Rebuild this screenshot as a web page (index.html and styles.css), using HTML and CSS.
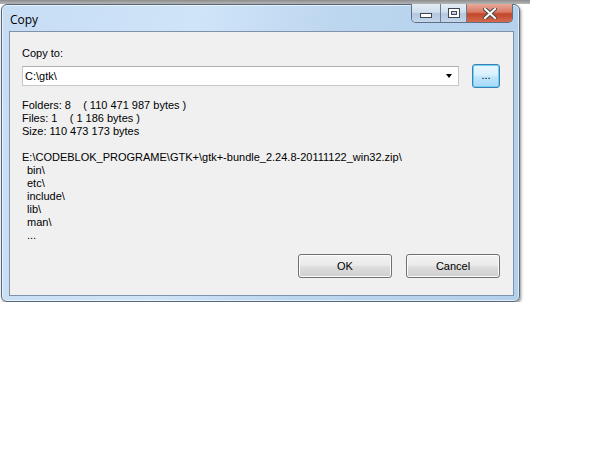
FILE: index.html
```html
<!DOCTYPE html>
<html lang="en">
<head>
    <meta charset="UTF-8">
    <meta name="viewport" content="width=device-width, initial-scale=1.0">
    <title>Copy</title>
    <link rel="stylesheet" href="styles.css">
</head>
<body>
    <div class="window">
        <div class="titlebar">
            <span class="title">Copy</span>
        </div>
        <!-- botones de la barra de titulo -->
        <div class="caption-buttons">
            <div class="cap-btn cap-min"><span class="min-glyph"></span></div>
            <div class="cap-btn cap-max"><span class="max-glyph"></span></div>
            <div class="cap-btn cap-close">
                <svg width="14" height="11" viewBox="0 0 14 11">
                    <path d="M2 1 L12 10 M12 1 L2 10" stroke="#4a4a4a" stroke-width="4" stroke-linecap="square"/>
                    <path d="M2 1 L12 10 M12 1 L2 10" stroke="#ffffff" stroke-width="2" stroke-linecap="square"/>
                </svg>
            </div>
        </div>

        <div class="client">
            <div class="label">Copy to:</div>
            <div class="dest-row">
                <div class="combo">
                    <span class="combo-text">C:\gtk\</span>
                    <span class="combo-arrow"></span>
                </div>
                <button class="browse-button">...</button>
            </div>

            <div class="info">
                <div class="line">Folders: 8    ( 110 471 987 bytes )</div>
                <div class="line">Files: 1    ( 1 186 bytes )</div>
                <div class="line">Size: 110 473 173 bytes</div>
            </div>

            <div class="tree">
                <div class="line">E:\CODEBLOK_PROGRAME\GTK+\gtk+-bundle_2.24.8-20111122_win32.zip\</div>
                <div class="line sub">bin\</div>
                <div class="line sub">etc\</div>
                <div class="line sub">include\</div>
                <div class="line sub">lib\</div>
                <div class="line sub">man\</div>
                <div class="line sub">...</div>
            </div>

            <div class="actions">
                <button class="dlg-button">OK</button>
                <button class="dlg-button">Cancel</button>
            </div>
        </div>
    </div>
</body>
</html>
```

FILE: styles.css
```css
body {
    margin: 0;
    font-family: "Liberation Sans", Arial, sans-serif;
    font-size: 11px;
    color: #000;
    background: linear-gradient(#8c8c8c, #b8b8b8) 0 0 / 530px 4px no-repeat, #ffffff;
}
.window {
    position: relative;
    box-sizing: border-box;
    width: 519px;
    height: 298px;
    margin: 4px 0 0 1px;
    border: 1px solid #55677c;
    border-radius: 6px;
    background: linear-gradient(100deg, #c6ddf4 0%, #cfe4f8 35%, #bcd6ef 60%, #b2cfeb 100%);
    box-shadow: 1px 2px 3px rgba(0,0,0,0.45), inset 0 0 0 1px rgba(255,255,255,0.6);
    display: flex;
    flex-direction: column;
}
.titlebar {
    height: 26px;
    display: flex;
    align-items: center;
    padding-left: 8px;
}
.title {
    font-family: "Open Sans", "Liberation Sans", sans-serif;
    font-size: 12px;
    color: #000;
    margin-top: 3px;
}
.caption-buttons {
    position: absolute;
    top: -1px;
    right: 6px;
    display: flex;
    height: 18px;
    border: 1px solid #5f6f84;
    border-top: none;
    border-radius: 0 0 5px 5px;
    overflow: hidden;
}
.cap-btn {
    height: 18px;
    display: flex;
    align-items: center;
    justify-content: center;
}
.cap-min, .cap-max {
    width: 28px;
    background: linear-gradient(#e4edf7 0%, #d0deee 45%, #b3c7de 55%, #c4d6ea 100%);
    border-right: 1px solid #6c7d92;
}
.cap-max {
    width: 25px;
}
.cap-close {
    width: 45px;
    background: linear-gradient(#e9a99a 0%, #d97a63 45%, #c2462b 55%, #d46a4e 100%);
}
.min-glyph {
    width: 10px;
    height: 3px;
    margin-top: 5px;
    background: #fff;
    border: 1px solid #3e4650;
}
.max-glyph {
    width: 6px;
    height: 4px;
    border: 2px solid #fff;
    outline: 1px solid #3e4650;
    box-shadow: inset 0 0 0 1px #3e4650;
}
.client {
    box-sizing: border-box;
    height: 265px;
    margin: 0 5px 0 7px;
    padding: 15px 13px 0 12px;
    border: 1px solid #7f92a7;
    background: #f0f0f0;
    display: flex;
    flex-direction: column;
}
.label {
    line-height: 13px;
}
.dest-row {
    display: flex;
    align-items: center;
    height: 24px;
    margin-top: 4px;
}
.combo {
    box-sizing: border-box;
    width: 437px;
    height: 20px;
    border: 1px solid #c5c8ce;
    border-top-color: #abadb3;
    background: #fff;
    display: flex;
    align-items: center;
    padding-left: 2px;
}
.combo-text {
    flex: 1;
}
.combo-arrow {
    width: 0;
    height: 0;
    margin-right: 6px;
    border-left: 3.5px solid transparent;
    border-right: 3.5px solid transparent;
    border-top: 4px solid #000;
}
.browse-button {
    box-sizing: border-box;
    width: 28px;
    height: 24px;
    margin-left: auto;
    padding: 0 0 3px 0;
    font-family: inherit;
    font-size: 11px;
    color: #000;
    border: 1px solid #3c7fb1;
    border-radius: 3px;
    background: linear-gradient(#eaf6fd 0%, #d9f0fc 45%, #bee6fd 55%, #a7d9f5 100%);
    box-shadow: inset 0 0 0 1px #6fd0f8;
}
.info {
    margin-top: 11px;
}
.line {
    line-height: 13px;
    white-space: pre;
}
.tree {
    margin-top: 13px;
}
.sub {
    padding-left: 5px;
}
.actions {
    display: flex;
    justify-content: flex-end;
    gap: 14px;
    margin-top: 12px;
}
.dlg-button {
    box-sizing: border-box;
    width: 94px;
    height: 24px;
    padding: 0;
    font-family: inherit;
    font-size: 11px;
    color: #000;
    border: 1px solid #707070;
    border-radius: 3px;
    background: linear-gradient(#f2f2f2 0%, #ebebeb 45%, #dddddd 55%, #cfcfcf 100%);
    box-shadow: inset 0 0 0 1px #fcfcfc;
}
```
